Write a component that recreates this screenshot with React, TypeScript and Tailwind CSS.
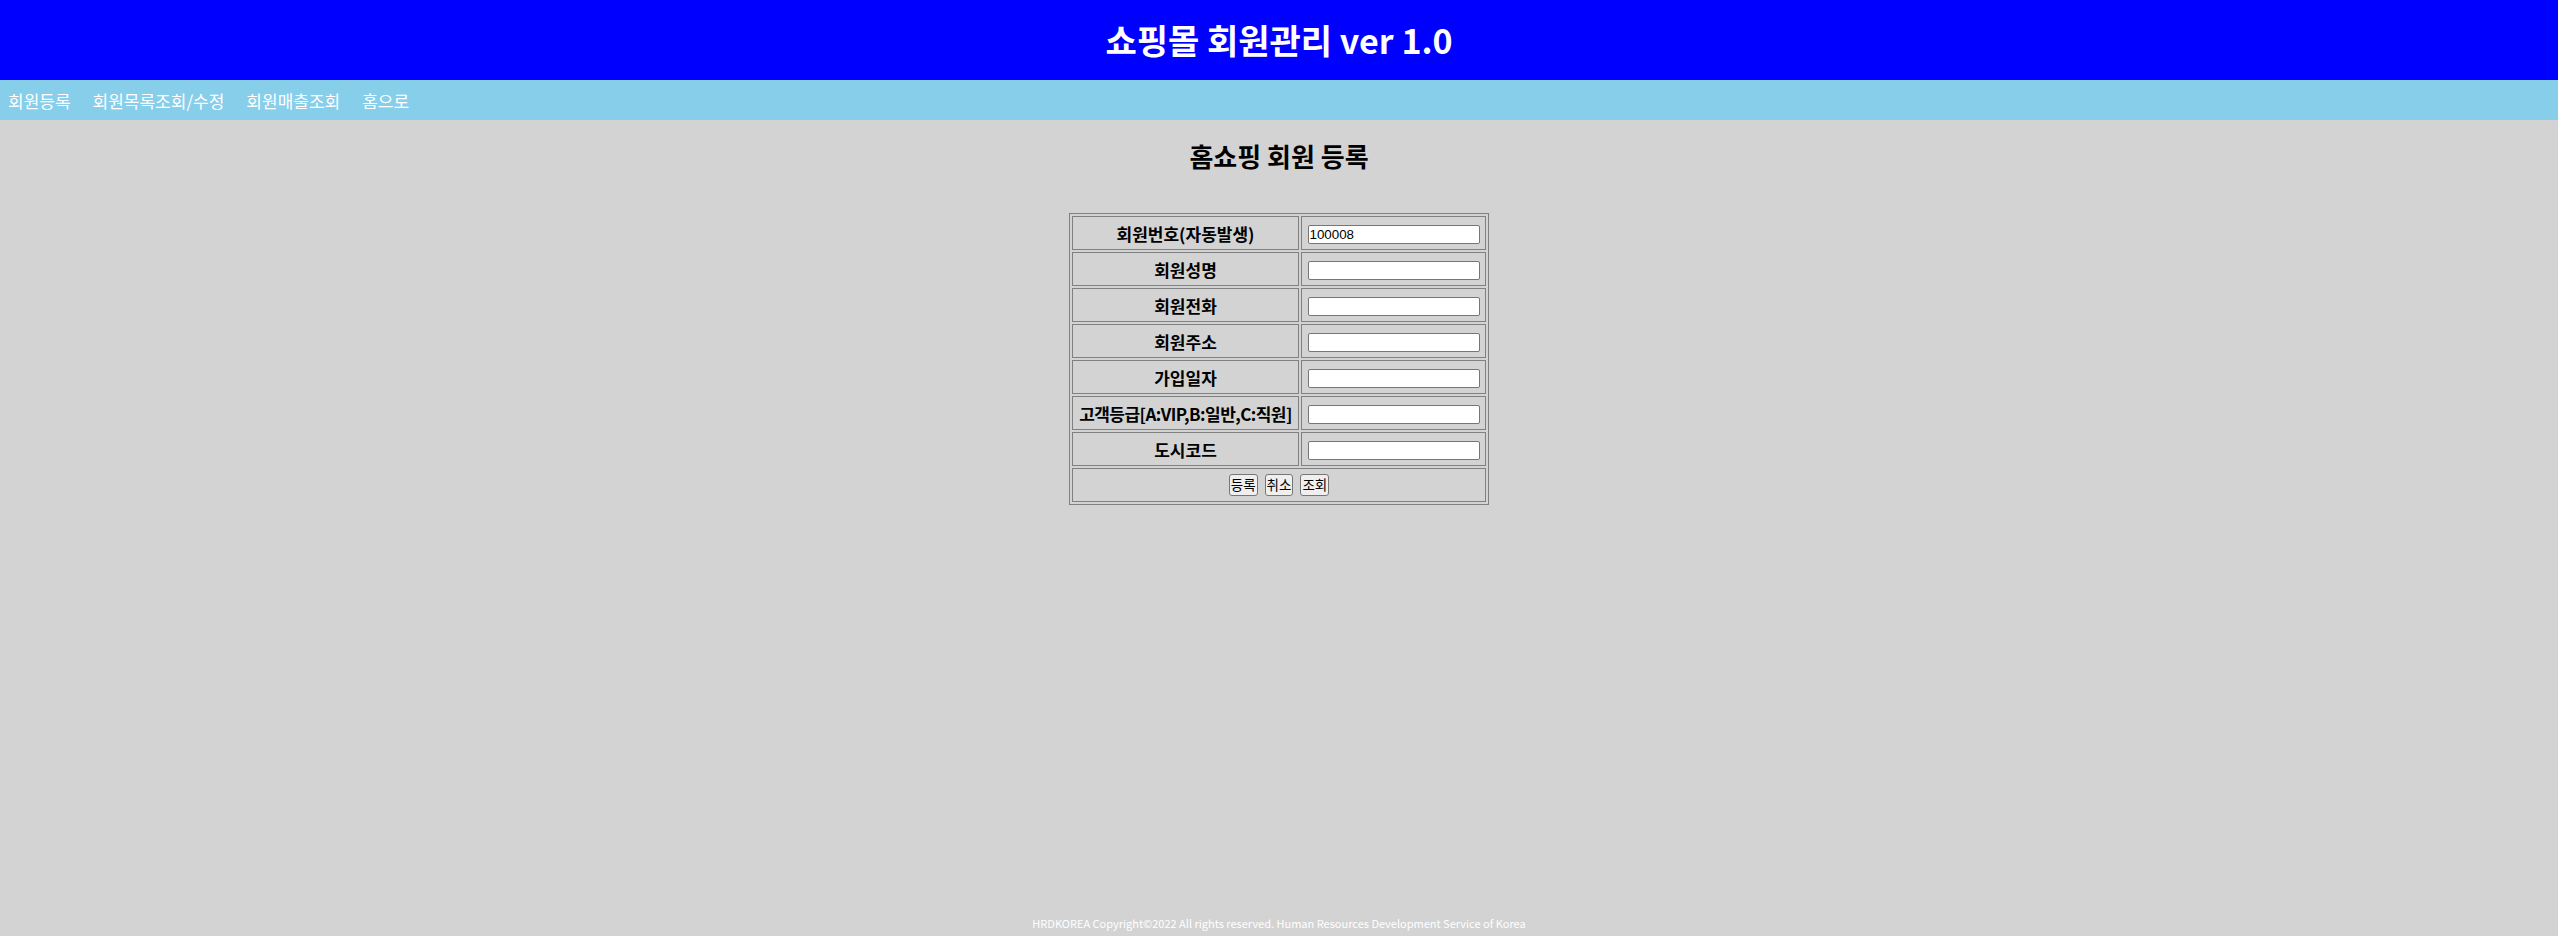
import { useState } from 'react';

const fields = [
  { label: '회원번호(자동발생)', name: 'custno', value: '100008', tight: false },
  { label: '회원성명', name: 'custname', value: '', tight: false },
  { label: '회원전화', name: 'phone', value: '', tight: false },
  { label: '회원주소', name: 'address', value: '', tight: false },
  { label: '가입일자', name: 'joindate', value: '', tight: false },
  { label: '고객등급[A:VIP,B:일반,C:직원]', name: 'grade', value: '', tight: true },
  { label: '도시코드', name: 'city', value: '', tight: false },
];

const menus = ['회원등록', '회원목록조회/수정', '회원매출조회', '홈으로'];

export default function App() {
  const [form, setForm] = useState<Record<string, string>>(
    Object.fromEntries(fields.map((f) => [f.name, f.value]))
  );

  return (
    <div className="min-h-screen flex flex-col bg-[#d3d3d3] font-['Noto_Sans_CJK_KR',sans-serif]">
      <header className="h-[80px] bg-[#0000ff] flex items-center justify-center">
        <h1 className="text-[34px] font-bold text-white leading-none">쇼핑몰 회원관리 ver 1.0</h1>
      </header>

      <nav className="h-[40px] bg-[#87ceeb] flex items-center gap-[22px] pl-[8px] text-[17px] text-white">
        {menus.map((m) => (
          <a key={m} href="#" className="leading-none">
            {m}
          </a>
        ))}
      </nav>

      <main className="flex-1">
        <h2 className="mt-[20px] text-center text-[26px] leading-[32px] font-bold text-black">홈쇼핑 회원 등록</h2>

        <form onSubmit={(e) => e.preventDefault()}>
          <table className="mx-auto mt-[41px] border border-[#808080] border-separate border-spacing-[2px]">
            <tbody>
              {fields.map((f) => (
                <tr key={f.name}>
                  <td className="border border-[#808080] p-0">
                    <div
                      className={
                        f.tight
                          ? 'w-[225px] h-[32px] pt-[2px] flex items-center justify-center text-[17px] tracking-[-0.55px] font-bold text-black whitespace-nowrap'
                          : 'w-[225px] h-[32px] pt-[2px] flex items-center justify-center text-[17px] font-bold text-black whitespace-nowrap'
                      }
                    >
                      {f.label}
                    </div>
                  </td>
                  <td className="border border-[#808080] p-0">
                    <div className="w-[183px] h-[32px] pt-[8px] flex justify-center">
                      <input
                        type="text"
                        value={form[f.name]}
                        onChange={(e) => setForm({ ...form, [f.name]: e.target.value })}
                        className="w-[172px] h-[19px] px-[1px] bg-white border border-[#767676] rounded-[2px] text-[13.33px] text-black font-['Liberation_Sans',Arial,sans-serif] outline-none"
                      />
                    </div>
                  </td>
                </tr>
              ))}
              <tr>
                <td colSpan={2} className="border border-[#808080] p-0">
                  <div className="h-[32px] flex items-center justify-center gap-[7px]">
                    {['등록', '취소', '조회'].map((b) => (
                      <button
                        key={b}
                        type="button"
                        className="h-[22px] px-[1px] bg-[#efefef] border border-[#767676] rounded-[3px] text-[13.5px] leading-none text-black"
                      >
                        {b}
                      </button>
                    ))}
                  </div>
                </td>
              </tr>
            </tbody>
          </table>
        </form>
      </main>

      <footer className="h-[26px] flex items-center justify-center text-[11px] text-white">
        HRDKOREA Copyright©2022 All rights reserved. Human Resources Development Service of Korea
      </footer>
    </div>
  );
}
